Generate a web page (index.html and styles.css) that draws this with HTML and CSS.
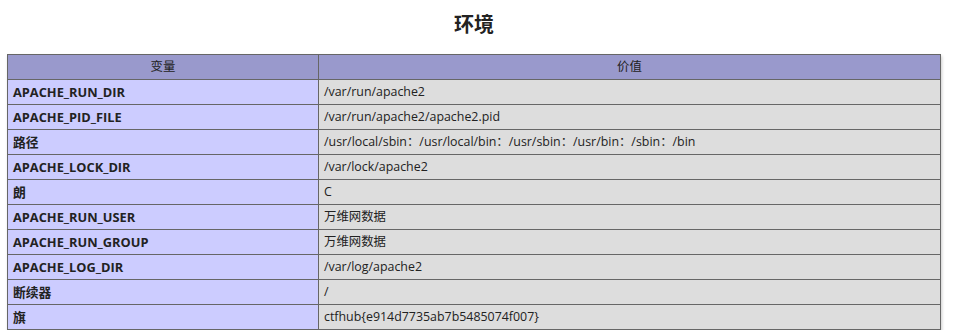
FILE: index.html
```html
<!DOCTYPE html>
<html lang="zh">
<head>
<meta charset="utf-8">
<title>环境</title>
<link rel="stylesheet" href="styles.css">
</head>
<body>
<div class="center">
  <h2 class="title">环境</h2>
  <table class="env">
    <thead>
      <tr class="h"><th>变量</th><th>价值</th></tr>
    </thead>
    <tbody>
      <tr><td class="e">APACHE_RUN_DIR</td><td class="v">/var/run/apache2</td></tr>
      <tr><td class="e">APACHE_PID_FILE</td><td class="v">/var/run/apache2/apache2.pid</td></tr>
      <tr><td class="e">路径</td><td class="v">/usr/local/sbin：/usr/local/bin：/usr/sbin：/usr/bin：/sbin：/bin</td></tr>
      <tr><td class="e">APACHE_LOCK_DIR</td><td class="v">/var/lock/apache2</td></tr>
      <tr><td class="e">朗</td><td class="v">C</td></tr>
      <tr><td class="e">APACHE_RUN_USER</td><td class="v">万维网数据</td></tr>
      <tr><td class="e">APACHE_RUN_GROUP</td><td class="v">万维网数据</td></tr>
      <tr><td class="e">APACHE_LOG_DIR</td><td class="v">/var/log/apache2</td></tr>
      <tr><td class="e">断续器</td><td class="v">/</td></tr>
      <tr><td class="e">旗</td><td class="v">ctfhub{e914d7735ab7b5485074f007}</td></tr>
    </tbody>
  </table>
</div>
</body>
</html>
```
FILE: styles.css
```css
html, body {
  margin: 0;
  padding: 0;
  background: #fff;
  color: #222;
  font-family: "Open Sans", "Noto Sans CJK SC", sans-serif;
}
.center {
  width: 934px;
  margin-left: 7px;
}
.title {
  margin: 11px 0 15px;
  font-size: 20px;
  line-height: 28px;
  font-weight: bold;
  text-align: center;
  color: #222;
}
.env {
  width: 934px;
  border-collapse: collapse;
  border: 0;
  box-shadow: 1px 2px 3px #ccc;
}
.env th, .env td {
  border: 1px solid #666;
  font-size: 12.4px;
  line-height: 16px;
  height: 16px;
  padding: 0 5px;
  vertical-align: middle;
  text-align: left;
}
.env tr {
  height: 25px;
}
.h th {
  background: #99c;
  text-align: center;
  font-weight: normal;
}
.e {
  background: #ccf;
  width: 300px;
  font-weight: bold;
}
.env td.e {
  font-size: 12.8px;
}
.v {
  background: #ddd;
}
```
